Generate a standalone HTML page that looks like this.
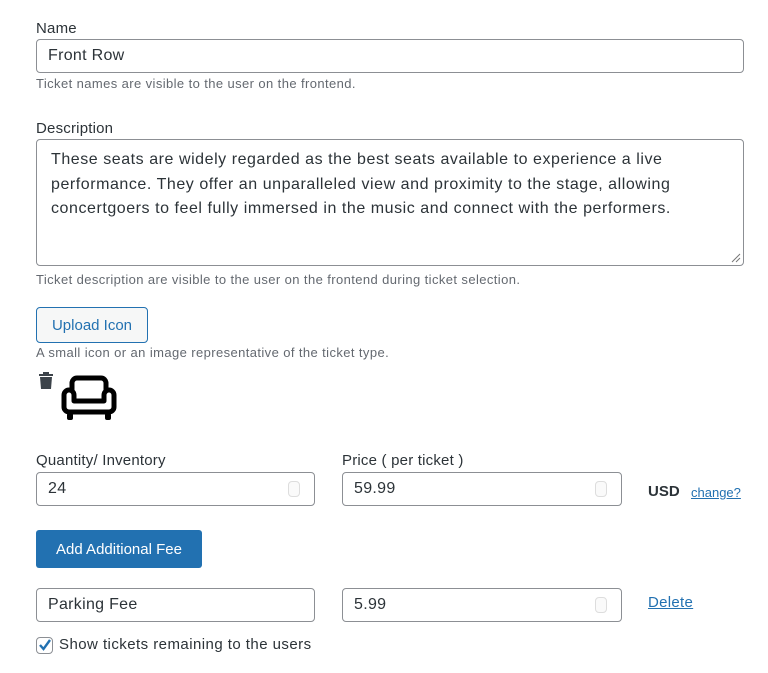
<!DOCTYPE html>
<html><head><meta charset="utf-8"><style>
*{box-sizing:border-box;margin:0;padding:0}
body{width:768px;height:673px;background:#fff;font-family:"Liberation Sans",Arial,sans-serif;color:#1e1e1e;position:relative;overflow:hidden}
.a{position:absolute;white-space:nowrap}
.lbl{font-size:15px;color:#2c3338;letter-spacing:0.2px}
.help{font-size:13px;color:#646970;letter-spacing:0.4px}
.inp{position:absolute;border:1px solid #8c8f94;border-radius:4px;background:#fff;font-size:16px;color:#2c3338;padding-left:11px;display:flex;align-items:center;letter-spacing:0.3px}
.spin{position:absolute;right:14px;top:50%;transform:translateY(-50%);width:12px;height:16px;border:1px solid #ddd;border-radius:4px;background:#fafafa}
a{color:#2271b1;text-decoration:underline}
</style></head><body>
<div class="a lbl" style="left:36px;top:20px">Name</div>
<div class="inp" style="left:36px;top:39px;width:708px;height:34px">Front Row</div>
<div class="a help" style="left:36px;top:76px">Ticket names are visible to the user on the frontend.</div>

<div class="a lbl" style="left:36px;top:120px">Description</div>
<div class="inp" style="left:36px;top:139px;width:708px;height:127px;align-items:flex-start;padding:8px 14px;white-space:nowrap;line-height:24.5px;letter-spacing:0.55px">These seats are widely regarded as the best seats available to experience a live<br>performance. They offer an unparalleled view and proximity to the stage, allowing<br>concertgoers to feel fully immersed in the music and connect with the performers.</div>
<svg class="a" style="left:731px;top:253px" width="10" height="10"><path d="M1 9L9 1M5 9L9 5" stroke="#777" stroke-width="1"/></svg>
<div class="a help" style="left:36px;top:272px">Ticket description are visible to the user on the frontend during ticket selection.</div>

<div class="a" style="left:36px;top:307px;width:112px;height:36px;border:1px solid #2271b1;border-radius:4px;background:#f6f7f7;color:#2271b1;font-size:15px;display:flex;align-items:center;justify-content:center">Upload Icon</div>
<div class="a help" style="left:36px;top:345px">A small icon or an image representative of the ticket type.</div>
<svg class="a" style="left:38px;top:372px" width="16" height="18" viewBox="0 0 16 18"><rect x="1" y="2" width="14" height="2" fill="#3c434a"/><rect x="5" y="0" width="6" height="2" fill="#3c434a"/><path d="M2 5h12l-1 12H3z" fill="#3c434a"/></svg>
<svg class="a" style="left:61px;top:375px" width="56" height="46" viewBox="0 0 56 46"><g fill="none" stroke="#000" stroke-width="5" stroke-linejoin="round"><path d="M11 17V8a5 5 0 0 1 5-5h24a5 5 0 0 1 5 5v9"/><path d="M8 15a5 5 0 0 1 5 5v6h30v-6a5 5 0 0 1 10 0v12a5 5 0 0 1-5 5H8a5 5 0 0 1-5-5V20a5 5 0 0 1 5-5z"/></g><rect x="6" y="38" width="6" height="7" rx="2"/><rect x="44" y="38" width="6" height="7" rx="2"/></svg>

<div class="a lbl" style="left:36px;top:452px">Quantity/ Inventory</div>
<div class="inp" style="left:36px;top:472px;width:279px;height:34px">24<div class="spin"></div></div>
<div class="a lbl" style="left:342px;top:452px">Price ( per ticket )</div>
<div class="inp" style="left:342px;top:472px;width:280px;height:34px">59.99<div class="spin"></div></div>
<div class="a" style="left:648px;top:483px;font-size:15px;font-weight:bold;color:#2c3338">USD</div>
<a class="a" style="left:691px;top:485px;font-size:13px">change?</a>

<div class="a" style="left:36px;top:530px;width:166px;height:38px;background:#2271b1;border-radius:3px;color:#fff;font-size:15px;display:flex;align-items:center;justify-content:center">Add Additional Fee</div>

<div class="inp" style="left:36px;top:588px;width:279px;height:34px">Parking Fee</div>
<div class="inp" style="left:342px;top:588px;width:280px;height:34px">5.99<div class="spin"></div></div>
<a class="a" style="left:648px;top:594px;font-size:15px;letter-spacing:0.3px">Delete</a>

<div class="a" style="left:36px;top:637px;width:17px;height:17px;border:1px solid #8c8f94;border-radius:4px;background:#fff"></div>
<svg class="a" style="left:37px;top:637px" width="16" height="16"><path d="M3 8l3.5 4L13 3" fill="none" stroke="#2271b1" stroke-width="2.4"/></svg>
<div class="a" style="left:59px;top:636px;font-size:15px;color:#2c3338;letter-spacing:0.45px">Show tickets remaining to the users</div>
</body></html>
